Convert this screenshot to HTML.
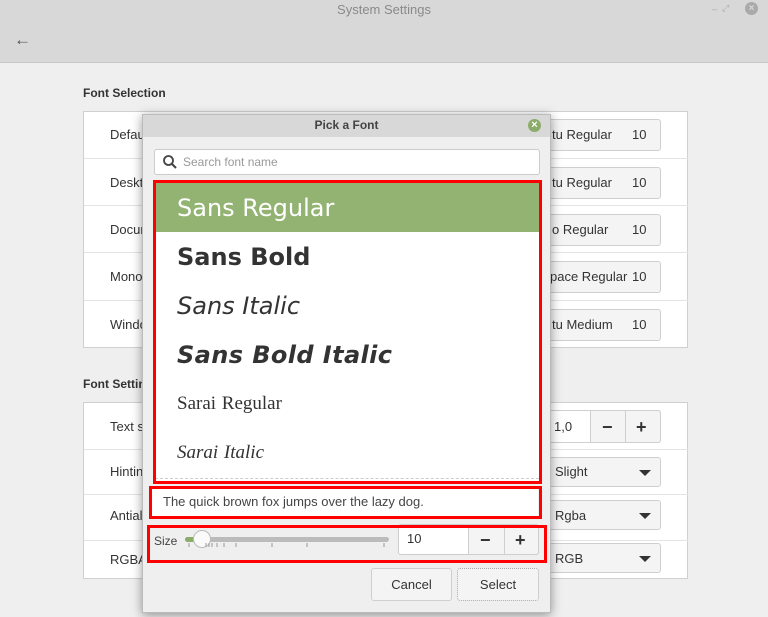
<!DOCTYPE html>
<html><head><meta charset="utf-8"><style>
*{box-sizing:border-box;margin:0;padding:0}
body{width:768px;height:617px;overflow:hidden;background:#efefef;font-family:"Liberation Sans","DejaVu Sans",sans-serif;font-size:13px;color:#333;position:relative}
.a{position:absolute}
.hdr{left:0;top:0;width:768px;height:63px;background:#d8d8d8;border-bottom:1px solid #c8c8c8}
.frame{background:#fff;border:1px solid #d0d0d0}
.sep{height:1px;background:#e4e4e4;left:0;width:604px}
.btn{background:#f4f4f4;border:1px solid #cfcfcf;border-radius:3px}
.lbl{font-size:13px;color:#333}
.tri{width:0;height:0;border-left:6px solid transparent;border-right:6px solid transparent;border-top:6px solid #333}
.red{border:3px solid #f00}
.fr{position:absolute;left:22px;color:#333;font-family:"DejaVu Sans",sans-serif;font-size:25px;white-space:nowrap}
</style></head><body>
<div class="a hdr"></div>
<div class="a" style="left:0;width:768px;top:2px;text-align:center;color:#8a8a8a;font-size:13px">System Settings</div>
<div class="a" style="left:712px;top:4px;color:#aaa;font-size:9px">–</div>
<div class="a" style="left:722px;top:3px;color:#aaa;font-size:9px">⤢</div>
<div class="a" style="left:745px;top:2px;width:13px;height:13px;border-radius:50%;background:#aaa;color:#d8d8d8;font-size:10px;line-height:13px;text-align:center;font-weight:bold">×</div>
<div class="a" style="left:14px;top:30px;font-size:17px;color:#555">←</div>

<div class="a" style="left:83px;top:86px;font-weight:bold;font-size:12px">Font Selection</div>
<div class="a frame" style="left:83px;top:111px;width:605px;height:237px">
 <div class="a sep" style="top:46px"></div><div class="a sep" style="top:93px"></div><div class="a sep" style="top:140px"></div><div class="a sep" style="top:188px"></div>
</div>
<div class="a lbl" style="left:110px;top:127px">Default font</div>
<div class="a lbl" style="left:110px;top:175px">Desktop font</div>
<div class="a lbl" style="left:110px;top:222px">Document font</div>
<div class="a lbl" style="left:110px;top:269px">Monospace font</div>
<div class="a lbl" style="left:110px;top:317px">Window title font</div>
<div class="a btn" style="left:500px;top:119px;width:161px;height:32px"></div>
<div class="a btn" style="left:500px;top:167px;width:161px;height:32px"></div>
<div class="a btn" style="left:500px;top:214px;width:161px;height:32px"></div>
<div class="a btn" style="left:500px;top:261px;width:161px;height:32px"></div>
<div class="a btn" style="left:500px;top:309px;width:161px;height:32px"></div>
<div class="a lbl" style="left:552px;top:127px">tu Regular</div><div class="a lbl" style="left:632px;top:127px">10</div>
<div class="a lbl" style="left:552px;top:175px">tu Regular</div><div class="a lbl" style="left:632px;top:175px">10</div>
<div class="a lbl" style="left:552px;top:222px">o Regular</div><div class="a lbl" style="left:632px;top:222px">10</div>
<div class="a lbl" style="left:550px;top:269px">pace Regular</div><div class="a lbl" style="left:632px;top:269px">10</div>
<div class="a lbl" style="left:552px;top:317px">tu Medium</div><div class="a lbl" style="left:632px;top:317px">10</div>

<div class="a" style="left:83px;top:377px;font-weight:bold;font-size:12px">Font Settings</div>
<div class="a frame" style="left:83px;top:402px;width:605px;height:177px">
 <div class="a sep" style="top:46px"></div><div class="a sep" style="top:91px"></div><div class="a sep" style="top:137px"></div>
</div>
<div class="a lbl" style="left:110px;top:419px">Text scaling factor</div>
<div class="a lbl" style="left:110px;top:464px">Hinting</div>
<div class="a lbl" style="left:110px;top:508px">Antialiasing</div>
<div class="a lbl" style="left:110px;top:552px">RGBA order</div>
<div class="a btn" style="left:500px;top:410px;width:161px;height:33px;background:#fff"></div>
<div class="a btn" style="left:590px;top:410px;width:36px;height:33px;border-radius:0"></div>
<div class="a btn" style="left:625px;top:410px;width:36px;height:33px;border-radius:0 3px 3px 0"></div>
<div class="a lbl" style="left:554px;top:419px">1,0</div>
<div class="a" style="left:602px;top:417px;font-size:18px;font-weight:bold">−</div>
<div class="a" style="left:636px;top:417px;font-size:18px;font-weight:bold">+</div>
<div class="a btn" style="left:500px;top:457px;width:161px;height:30px"></div><div class="a lbl" style="left:555px;top:464px">Slight</div><div class="a tri" style="left:639px;top:470px"></div>
<div class="a btn" style="left:500px;top:500px;width:161px;height:30px"></div><div class="a lbl" style="left:555px;top:508px">Rgba</div><div class="a tri" style="left:639px;top:513px"></div>
<div class="a btn" style="left:500px;top:543px;width:161px;height:30px"></div><div class="a lbl" style="left:555px;top:551px">RGB</div><div class="a tri" style="left:639px;top:556px"></div>

<!-- dialog -->
<div class="a" style="left:142px;top:114px;width:409px;height:499px;background:#efefef;border:1px solid #bbb;box-shadow:0 2px 10px rgba(0,0,0,.4)"></div>
<div class="a" style="left:143px;top:115px;width:407px;height:22px;background:#d8d8d8"></div>
<div class="a" style="left:143px;top:118px;width:407px;text-align:center;font-size:12px;font-weight:bold;color:#444">Pick a Font</div>
<div class="a" style="left:528px;top:119px;width:13px;height:13px;border-radius:50%;background:#8bad69;color:#fff;font-size:11px;line-height:13px;text-align:center;font-weight:bold">×</div>
<div class="a" style="left:154px;top:149px;width:386px;height:26px;background:#fff;border:1px solid #ccc;border-radius:3px"></div>
<svg class="a" style="left:162px;top:154px" width="16" height="16"><circle cx="6.5" cy="6.5" r="4.5" fill="none" stroke="#444" stroke-width="1.8"/><line x1="10" y1="10" x2="14" y2="14" stroke="#444" stroke-width="2"/></svg>
<div class="a" style="left:183px;top:155px;font-size:12px;color:#999">Search font name</div>

<div class="a" style="left:155px;top:182px;width:384px;height:299px;background:#fff;overflow:hidden">
 <div class="a" style="left:0;top:1px;width:384px;height:49px;background:#92b372"></div>
 <div class="fr" style="top:12px;color:#fff;font-size:24px">Sans Regular</div>
 <div class="fr" style="top:61px;font-weight:bold;font-size:24px">Sans Bold</div>
 <div class="fr" style="top:110px;font-style:italic;font-size:24px">Sans Italic</div>
 <div class="fr" style="top:159px;font-weight:bold;font-style:italic;font-size:24px;letter-spacing:0.4px">Sans Bold Italic</div>
 <div class="fr" style="top:211px;font-family:'Liberation Serif',serif;font-size:19px;word-spacing:1px">Sarai Regular</div>
 <div class="fr" style="top:260px;font-family:'Liberation Serif',serif;font-style:italic;font-size:19px;word-spacing:1px">Sarai Italic</div>
 <div class="a" style="left:0;top:296px;width:384px;border-top:1px dashed #ccc"></div>
</div>
<div class="a red" style="left:153px;top:180px;width:389px;height:304px"></div>

<div class="a" style="left:152px;top:489px;width:386px;height:27px;background:#fff"></div>
<div class="a" style="left:163px;top:494px;font-size:13px;color:#444">The quick brown fox jumps over the lazy dog.</div>
<div class="a red" style="left:149px;top:486px;width:393px;height:33px"></div>

<div class="a" style="left:154px;top:534px;font-size:12px;color:#444">Size</div>
<div class="a" style="left:185px;top:537px;width:204px;height:5px;border-radius:3px;background:#bbb"></div>
<div class="a" style="left:185px;top:537px;width:14px;height:5px;border-radius:3px;background:#8bad69"></div>
<div class="a" style="left:193px;top:530px;width:18px;height:18px;border-radius:50%;background:#fafafa;border:1px solid #bbb"></div>
<svg class="a" style="left:185px;top:543px" width="210" height="6"><g stroke="#999" stroke-width="1"><line x1="4" y1="0" x2="4" y2="4"/><line x1="21" y1="0" x2="21" y2="4"/><line x1="24" y1="0" x2="24" y2="4"/><line x1="27" y1="0" x2="27" y2="4"/><line x1="32" y1="0" x2="32" y2="4"/><line x1="39" y1="0" x2="39" y2="4"/><line x1="51" y1="0" x2="51" y2="4"/><line x1="87" y1="0" x2="87" y2="4"/><line x1="122" y1="0" x2="122" y2="4"/><line x1="199" y1="0" x2="199" y2="4"/></g></svg>
<div class="a" style="left:398px;top:524px;width:141px;height:31px;background:#fff;border:1px solid #ccc;border-radius:3px"></div>
<div class="a btn" style="left:468px;top:524px;width:37px;height:31px;border-radius:0"></div>
<div class="a btn" style="left:504px;top:524px;width:35px;height:31px;border-radius:0 3px 3px 0"></div>
<div class="a" style="left:407px;top:531px;font-size:13px">10</div>
<div class="a" style="left:480px;top:530px;font-size:18px;font-weight:bold">−</div>
<div class="a" style="left:515px;top:530px;font-size:18px;font-weight:bold">+</div>
<div class="a red" style="left:147px;top:525px;width:400px;height:38px"></div>

<div class="a btn" style="left:371px;top:568px;width:81px;height:33px"></div>
<div class="a" style="left:371px;top:577px;width:81px;text-align:center;font-size:13px">Cancel</div>
<div class="a btn" style="left:457px;top:568px;width:82px;height:33px;border:1px dotted #aaa"></div>
<div class="a" style="left:457px;top:577px;width:82px;text-align:center;font-size:13px">Select</div>
</body></html>
